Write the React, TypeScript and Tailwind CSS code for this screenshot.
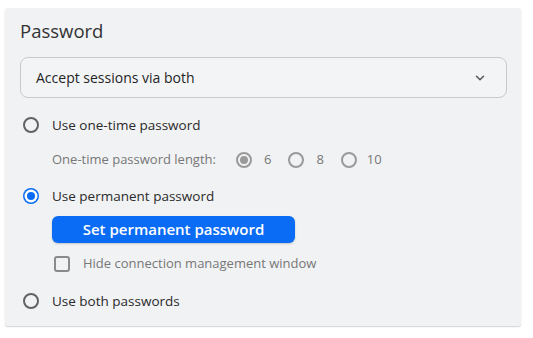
import { ChevronDown } from 'lucide-react';

// Password settings panel

function Radio({ checked = false, muted = false }: { checked?: boolean; muted?: boolean }) {
  if (checked && !muted) {
    return (
      <span className="flex h-4 w-4 shrink-0 items-center justify-center rounded-full bg-[#0a6cf5]">
        <span className="h-2 w-2 rounded-full bg-[#0a6cf5] ring-[2.5px] ring-white" />
      </span>
    );
  }
  return (
    <span
      className={
        'flex h-4 w-4 shrink-0 items-center justify-center rounded-full border-2 ' +
        (muted ? 'border-[#9a9a9a]' : 'border-[#626262]')
      }
    >
      {checked && <span className="h-2 w-2 rounded-full bg-[#9a9a9a]" />}
    </span>
  );
}

export default function App() {
  return (
    <div
      className="h-[338px] w-[533px] bg-white pl-[5px] pt-[8px]"
      style={{ fontFamily: '"Open Sans", "Noto Sans", sans-serif' }}
    >
      <div className="flex h-[318px] w-[516px] flex-col rounded-[3px] bg-[#f1f2f4] pl-[15px] pr-[14px] pt-[10px] shadow-[0_1px_1.5px_rgba(0,0,0,0.18)]">
        <h2 className="text-[18.5px] leading-[26px] text-[#333]">Password</h2>

        <div className="mt-[13px] flex h-[41px] items-center justify-between rounded-[8px] border border-[#c9c9cb] bg-[#f3f4f6] pl-[15px] pr-[19px]">
          <span className="text-[14px] text-[#242424]">Accept sessions via both</span>
          <ChevronDown size={14} strokeWidth={2.5} className="text-[#555]" />
        </div>

        <div className="mt-[17px] flex items-center gap-[13px] pl-[3px]">
          <Radio />
          <span className="text-[13.5px] text-[#2a2a2a]">Use one-time password</span>
        </div>

        <div className="mt-[15px] flex items-center pl-[32px] text-[13px] text-[#777]">
          <span>One-time password length:</span>
          <div className="ml-[20px] flex items-center gap-[12px]">
            <Radio checked muted />
            <span>6</span>
          </div>
          <div className="ml-[17px] flex items-center gap-[12px]">
            <Radio muted />
            <span>8</span>
          </div>
          <div className="ml-[17px] flex items-center gap-[10px]">
            <Radio muted />
            <span>10</span>
          </div>
        </div>

        <div className="mt-[16px] flex items-center gap-[13px] pl-[3px]">
          <Radio checked />
          <span className="text-[13.5px] text-[#2a2a2a]">Use permanent password</span>
        </div>

        <button className="ml-[32px] mt-[10px] h-[27px] w-[243px] rounded-[6px] bg-[#0a6cf5] text-[15px] font-semibold text-white shadow-[0_1px_2px_rgba(0,0,0,0.2)]">
          Set permanent password
        </button>

        <div className="mt-[11px] flex items-center gap-[13px] pl-[34px]">
          <span className="h-4 w-4 shrink-0 rounded-[3px] border-2 border-[#8a8a8a]" />
          <span className="text-[13px] text-[#777]">Hide connection management window</span>
        </div>

        <div className="mt-[17px] flex items-center gap-[13px] pl-[3px]">
          <Radio />
          <span className="text-[13.5px] text-[#2a2a2a]">Use both passwords</span>
        </div>
      </div>
    </div>
  );
}
